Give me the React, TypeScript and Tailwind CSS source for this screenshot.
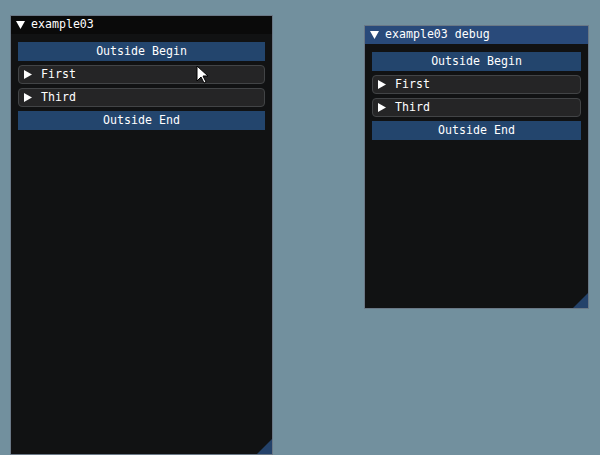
import React from "react";

const font = { fontFamily: '"DejaVu Sans Mono", "Liberation Mono", monospace' };

function Down() {
  return (
    <svg width="9" height="8" viewBox="0 0 9 8" className="shrink-0">
      <polygon points="0,0 9,0 4.5,8" fill="#ffffff" />
    </svg>
  );
}
function Right() {
  return (
    <svg width="8" height="9" viewBox="0 0 8 9" className="shrink-0">
      <polygon points="0,0 8,4.5 0,9" fill="#ffffff" />
    </svg>
  );
}

function Btn({ label }: { label: string }) {
  return (
    <div className="h-[19px] bg-[#23456d] flex items-center justify-center text-white leading-none">
      {label}
    </div>
  );
}
function Node({ label }: { label: string }) {
  return (
    <div className="h-[19px] bg-[#252526] border border-[#424446] rounded-[4px] flex items-center pl-[5px] gap-[9px] text-white leading-none">
      <Right />
      <span>{label}</span>
    </div>
  );
}

function Win({
  title,
  active,
  className,
}: {
  title: string;
  active: boolean;
  className: string;
}) {
  return (
    <div
      className={
        "absolute border border-[#6a7886] bg-[#111213] flex flex-col " + className
      }
    >
      <div
        className={
          "h-[18px] flex items-center pl-[5px] gap-[6px] text-white leading-none " +
          (active ? "bg-[#294a7a]" : "bg-[#0a0a0a]")
        }
      >
        <Down />
        <span>{title}</span>
      </div>
      <div className="flex flex-col gap-[4px] px-[7px] pt-[8px]">
        <Btn label="Outside Begin" />
        <Node label="First" />
        <Node label="Third" />
        <Btn label="Outside End" />
      </div>
      <svg
        className="absolute right-0 bottom-0"
        width="15"
        height="15"
        viewBox="0 0 15 15"
      >
        <polygon points="15,0 15,15 0,15" fill="#24426a" />
      </svg>
    </div>
  );
}

export default function App() {
  return (
    <div
      className="relative w-[600px] h-[455px] bg-[#72909e] overflow-hidden text-[11.6px]"
      style={font}
    >
      <Win title="example03" active={false} className="left-[10px] top-[15px] w-[263px] h-[440px]" />
      <Win
        title="example03 debug"
        active={true}
        className="left-[364px] top-[25px] w-[225px] h-[284px]"
      />
      <svg
        className="absolute left-[196px] top-[65px]"
        width="14"
        height="20"
        viewBox="0 0 14 20"
      >
        <polygon
          points="1,1 1,16 5,12 8,18 10,17 7,11 12,11"
          fill="#ffffff"
          stroke="#000000"
          strokeWidth="1"
        />
      </svg>
    </div>
  );
}
